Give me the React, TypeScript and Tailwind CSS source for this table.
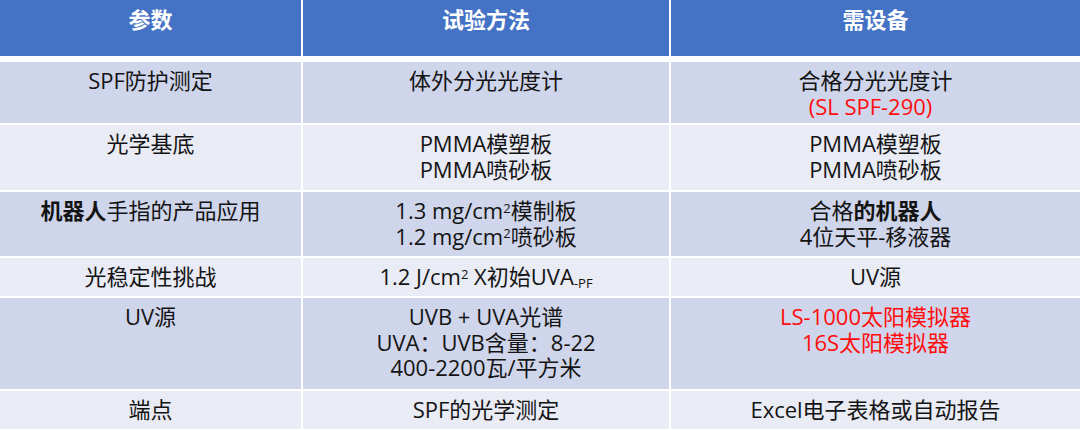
import React from "react";

const font = {
  fontFamily: '"Open Sans", "Noto Sans CJK SC", sans-serif',
};

type Row = {
  h: string;
  bg: string;
  cells: React.ReactNode[];
};

const Red = ({ children }: { children: React.ReactNode }) => (
  <span className="text-[#ff0d0d]">{children}</span>
);

const rows: Row[] = [
  {
    h: "h-[61px]",
    bg: "bg-[#cfd5ea]",
    cells: [
      <div>SPF防护测定</div>,
      <div>体外分光光度计</div>,
      <>
        <div>合格分光光度计</div>
        <div className="pr-[10px]">
          <Red>(SL SPF-290)</Red>
        </div>
      </>,
    ],
  },
  {
    h: "h-[65px]",
    bg: "bg-[#e9ebf5]",
    cells: [
      <div>光学基底</div>,
      <>
        <div>PMMA模塑板</div>
        <div>PMMA喷砂板</div>
      </>,
      <>
        <div>PMMA模塑板</div>
        <div>PMMA喷砂板</div>
      </>,
    ],
  },
  {
    h: "h-[64px]",
    bg: "bg-[#cfd5ea]",
    cells: [
      <div>
        <b className="font-bold">机器人</b>手指的产品应用
      </div>,
      <>
        <div>
          1.3 mg/cm<sup className="text-[13px]">2</sup>模制板
        </div>
        <div>
          1.2 mg/cm<sup className="text-[13px]">2</sup>喷砂板
        </div>
      </>,
      <>
        <div>
          合格<b className="font-bold">的机器人</b>
        </div>
        <div>4位天平-移液器</div>
      </>,
    ],
  },
  {
    h: "h-[38px]",
    bg: "bg-[#e9ebf5]",
    cells: [
      <div>光稳定性挑战</div>,
      <div>
        1.2 J/cm<sup className="text-[13px]">2</sup> X初始UVA
        <sub className="text-[13px]">-PF</sub>
      </div>,
      <div>UV源</div>,
    ],
  },
  {
    h: "h-[91px]",
    bg: "bg-[#cfd5ea]",
    cells: [
      <div>UV源</div>,
      <>
        <div>UVB + UVA光谱</div>
        <div>UVA：UVB含量：8-22</div>
        <div>400-2200瓦/平方米</div>
      </>,
      <>
        <div>
          <Red>LS-1000太阳模拟器</Red>
        </div>
        <div>
          <Red>16S太阳模拟器</Red>
        </div>
      </>,
    ],
  },
  {
    h: "h-[38px]",
    bg: "bg-[#e9ebf5]",
    cells: [
      <div>端点</div>,
      <div>SPF的光学测定</div>,
      <div>Excel电子表格或自动报告</div>,
    ],
  },
];

const widths = ["w-[301px]", "w-[366px]", "flex-1"];

export default function App() {
  return (
    <div
      className="w-[1080px] h-[430px] bg-white overflow-hidden flex flex-col gap-[2px]"
      style={font}
    >
      <div className="flex gap-[2px] h-[56px] mb-[4px]">
        {["参数", "试验方法", "需设备"].map((t, i) => (
          <div
            key={t}
            className={`${widths[i]} bg-[#4472c4] text-white font-bold text-[22px] leading-[26px] pt-[6px] text-center`}
          >
            {t}
          </div>
        ))}
      </div>
      {rows.map((r, ri) => (
        <div key={ri} className={`flex gap-[2px] ${r.h}`}>
          {r.cells.map((c, ci) => (
            <div
              key={ci}
              className={`${widths[ci]} ${r.bg} text-[#141414] text-[22px] leading-[25.5px] pt-[6px] text-center whitespace-nowrap`}
            >
              {c}
            </div>
          ))}
        </div>
      ))}
    </div>
  );
}
